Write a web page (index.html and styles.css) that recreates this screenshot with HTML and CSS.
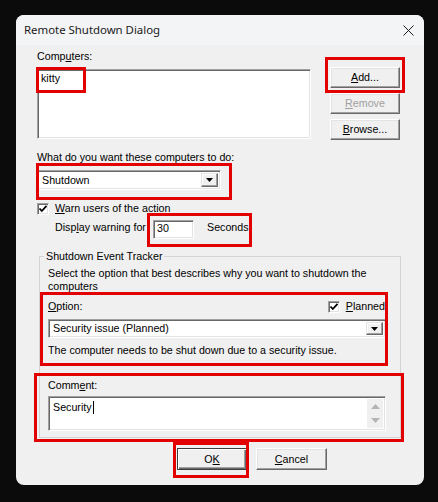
FILE: index.html
```html
<!DOCTYPE html>
<html lang="en">
<head>
<meta charset="utf-8">
<title>Remote Shutdown Dialog</title>
<link rel="stylesheet" href="styles.css">
</head>
<body>
<div class="page">
  <div class="dialog">
    <div class="titlebar">
      <span class="title">Remote Shutdown Dialog</span>
      <svg class="close" width="11" height="11" viewBox="0 0 11 11"><path d="M0.5 0.5 L10.5 10.5 M10.5 0.5 L0.5 10.5" stroke="#1a1a1a" stroke-width="1" fill="none"/></svg>
    </div>
    <div class="content">
      <div class="computers">
        <div class="computers-left">
          <div class="label">Comp<u>u</u>ters:</div>
          <div class="listbox sunken"><div class="list-item">kitty</div></div>
        </div>
        <div class="btn-col">
          <div class="btn"><span><u>A</u>dd...</span></div>
          <div class="btn disabled"><span><u>R</u>emove</span></div>
          <div class="btn"><span><u>B</u>rowse...</span></div>
        </div>
      </div>

      <div class="label label-action">What do you want these computers to do:</div>
      <div class="combo combo-action sunken">
        <span class="combo-text">Shutdown</span>
        <span class="combo-btn"><svg width="7" height="4" viewBox="0 0 7 4"><path d="M0 0 H7 L3.5 4 Z" fill="#000"/></svg></span>
      </div>

      <div class="check-row">
        <span class="checkbox sunken"><svg width="10" height="10" viewBox="0 0 10 10"><polyline points="1.5,4.5 3.8,7 8.5,1.8" fill="none" stroke="#000" stroke-width="1.8"/></svg></span>
        <span class="check-text"><u>W</u>arn users of the action</span>
      </div>

      <div class="warn-row">
        <span class="warn-label">Disp<u>l</u>ay warning for</span>
        <span class="edit sunken">30</span>
        <span class="warn-unit">Seconds</span>
      </div>

      <fieldset class="group">
        <legend>Shutdown Event Tracker</legend>
        <p class="group-desc">Select the option that best describes why you want to shutdown the<br>computers</p>
        <div class="option-row">
          <span><u>O</u>ption:</span>
          <span class="planned">
            <span class="checkbox sunken"><svg width="10" height="10" viewBox="0 0 10 10"><polyline points="1.5,4.5 3.8,7 8.5,1.8" fill="none" stroke="#000" stroke-width="1.8"/></svg></span>
            <span><u>P</u>lanned</span>
          </span>
        </div>
        <div class="combo combo-reason sunken">
          <span class="combo-text">Security issue (Planned)</span>
          <span class="combo-btn"><svg width="7" height="4" viewBox="0 0 7 4"><path d="M0 0 H7 L3.5 4 Z" fill="#000"/></svg></span>
        </div>
        <p class="reason-desc">The computer needs to be shut down due to a security issue.</p>
        <div class="label label-comment">Comm<u>e</u>nt:</div>
        <div class="textarea sunken">
          <span class="textarea-text">Security<span class="caret"></span></span>
          <span class="scrollbar">
            <svg width="9" height="5" viewBox="0 0 9 5"><path d="M0 5 H9 L4.5 0 Z" fill="#b4b4b4"/></svg>
            <svg width="9" height="5" viewBox="0 0 9 5"><path d="M0 0 H9 L4.5 5 Z" fill="#b4b4b4"/></svg>
          </span>
        </div>
      </fieldset>

      <div class="footer">
        <div class="btn btn-default"><span>O<u>K</u></span></div>
        <div class="btn btn-cancel"><span><u>C</u>ancel</span></div>
      </div>
    </div>
  </div>

  <div class="mark mark-kitty"></div>
  <div class="mark mark-add"></div>
  <div class="mark mark-action"></div>
  <div class="mark mark-seconds"></div>
  <div class="mark mark-option"></div>
  <div class="mark mark-comment"></div>
  <div class="mark mark-ok"></div>
</div>
</body>
</html>
```

FILE: styles.css
```css
* { box-sizing: border-box; }

html, body {
  margin: 0;
  padding: 0;
  background: #0b0b0b;
}

body {
  width: 438px;
  height: 502px;
  overflow: hidden;
  font-family: "Liberation Sans", Arial, sans-serif;
  font-size: 10.7px;
  line-height: 13px;
  color: #000;
}

.page {
  position: relative;
  width: 438px;
  height: 502px;
  padding: 15px 0 0 16px;
}

.dialog {
  width: 408px;
  height: 470px;
  background: #f0f0f0;
  border-radius: 8px;
  overflow: hidden;
}

.titlebar {
  height: 30px;
  display: flex;
  align-items: center;
  justify-content: space-between;
  padding: 0 10px 0 8px;
  background: #f3f4f6;
}

.title {
  font-family: "Noto Sans", "Open Sans", sans-serif;
  font-size: 11.4px;
  line-height: 16px;
  color: #1a1a1a;
}

.close { display: block; }

.content {
  padding: 5px 24px 0 21px;
}

u { text-decoration: underline; text-underline-offset: 1px; }

/* 3D borders */
.sunken {
  background: #fff;
  border: 1px solid;
  border-color: #a0a0a0 #ffffff #ffffff #a0a0a0;
  box-shadow: inset 1px 1px 0 #696969, inset -1px -1px 0 #e3e3e3;
}

.btn {
  display: flex;
  align-items: center;
  justify-content: center;
  width: 70px;
  height: 21px;
  background: #f0f0f0;
  border: 1px solid;
  border-color: #ffffff #696969 #696969 #ffffff;
  box-shadow: inset -1px -1px 0 #a0a0a0, inset 1px 1px 0 #e3e3e3;
}

.btn.disabled { color: #a0a0a0; }

.computers {
  display: flex;
  gap: 19px;
}

.computers-left { width: 274px; }

.listbox {
  margin-top: 6px;
  height: 70px;
  padding: 2px 3px;
}

.btn-col {
  margin-top: 17px;
  display: flex;
  flex-direction: column;
  gap: 5px;
}

.label-action { margin-top: 11px; }

.combo {
  display: flex;
  align-items: center;
  padding: 2px;
}

.combo-text {
  flex: 1;
  padding-left: 2px;
}

.combo-btn {
  display: flex;
  align-items: center;
  justify-content: center;
  width: 17px;
  align-self: stretch;
  background: #f0f0f0;
  border: 1px solid;
  border-color: #e3e3e3 #696969 #696969 #e3e3e3;
  box-shadow: inset -1px -1px 0 #a0a0a0, inset 1px 1px 0 #ffffff;
}

.combo-action {
  margin-top: 6px;
  width: 184px;
  height: 20px;
}

.check-row {
  margin-top: 12px;
  display: flex;
  align-items: center;
  height: 13px;
}

.checkbox {
  display: inline-flex;
  align-items: center;
  justify-content: center;
  width: 12px;
  height: 12px;
  flex: none;
}

.check-text { margin-left: 6px; }

.warn-row {
  margin-top: 5px;
  display: flex;
  align-items: flex-start;
  padding-left: 18px;
}

.warn-label {
  width: 98px;
  padding-top: 1px;
}

.edit {
  width: 41px;
  height: 19px;
  padding: 1px 3px;
}

.warn-unit {
  margin-left: 13px;
  padding-top: 1px;
}

.group {
  margin: 11px 0 0 2px;
  width: 362px;
  padding: 4px 14px 6px 8px;
  border: 1px solid #d4d4d4;
  min-width: 0;
}

.group legend {
  padding: 0 2px;
  margin-left: -4px;
  line-height: 13px;
}

.group p { margin: 0; }

.option-row {
  margin-top: 7px;
  display: flex;
  justify-content: space-between;
  align-items: center;
  height: 13px;
}

.planned {
  display: flex;
  align-items: center;
  gap: 6px;
  margin-right: 1px;
}

.combo-reason {
  margin-top: 6px;
  height: 19px;
}

.group .reason-desc { margin-top: 6px; }

.label-comment { margin-top: 22px; }

.textarea {
  margin-top: 4px;
  height: 35px;
  display: flex;
  padding: 2px;
}

.textarea-text {
  flex: 1;
  padding: 2px 0 0 2px;
}

.caret {
  display: inline-block;
  width: 1px;
  height: 13px;
  background: #000;
  vertical-align: -3px;
  margin-left: 1px;
}

.scrollbar {
  width: 16px;
  background: #f0f0f0;
  display: flex;
  flex-direction: column;
  justify-content: space-between;
  align-items: center;
  padding: 5px 0 5px;
}

.footer {
  margin: 10px 0 0 140px;
  display: flex;
  gap: 9px;
}

.btn-default {
  height: 22px;
  border: 1px solid #3c3c3c;
  box-shadow: inset 1px 1px 0 #ffffff, inset -1px -1px 0 #696969, inset -2px -2px 0 #a0a0a0;
}

.btn-cancel {
  width: 71px;
  height: 22px;
}

/* red annotation boxes laid over the screenshot */
.mark {
  position: absolute;
  border: 3px solid #e30000;
  pointer-events: none;
}
.mark-kitty   { left: 36px;  top: 67px;  width: 50px;  height: 26px; }
.mark-add     { left: 325px; top: 57px;  width: 80px;  height: 36px; }
.mark-action  { left: 36px;  top: 163px; width: 196px; height: 37px; }
.mark-seconds { left: 147px; top: 213px; width: 105px; height: 34px; }
.mark-option  { left: 40px;  top: 292px; width: 348px; height: 74px; }
.mark-comment { left: 34px;  top: 373px; width: 370px; height: 69px; }
.mark-ok      { left: 173px; top: 442px; width: 76px;  height: 36px; }
```
